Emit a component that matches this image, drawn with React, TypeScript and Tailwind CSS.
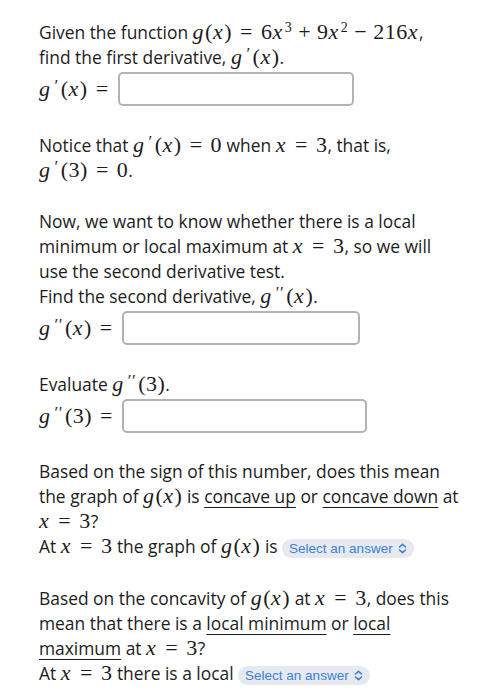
import React from 'react';

const V: React.FC<{ children: React.ReactNode }> = ({ children }) => (
  <span className="italic pr-[1px]">{children}</span>
);

// math run in a serif face, a bit bigger than the body text
const M: React.FC<{ children: React.ReactNode }> = ({ children }) => (
  <span className="font-['Liberation_Serif','DejaVu_Serif',serif] text-[22px] leading-none tracking-[0.5px]">{children}</span>
);

const Eq = () => <span className="mx-[8px]">=</span>;
const Op: React.FC<{ c: string }> = ({ c }) => <span className="mx-[6px]">{c}</span>;
const P: React.FC<{ n?: number }> = ({ n = 1 }) => (
  <span className="ml-[3px] mr-[2px] text-[17px] relative -top-[5px]">{n === 2 ? "′′" : "′"}</span>
);

const Gx = () => (
  <M>
    <V>g</V>(<V>x</V>)
  </M>
);

const X3 = () => (
  <M>
    <V>x</V>
    <Eq />3
  </M>
);

const AnswerBox: React.FC<{ width: string }> = ({ width }) => (
  <div className={`h-[34px] ${width} rounded-[5px] border-2 border-[#b3b3b3] bg-white`} />
);

const Select = () => (
  <button
    type="button"
    className="inline-flex items-center h-[19px] px-[7px] rounded-full bg-[#e6e9ee] text-[#3d7fd9] text-[13.5px] leading-none font-['Liberation_Sans',sans-serif] align-middle"
  >
    Select an answer
    <svg className="ml-[5px] w-[9px] h-[11px]" viewBox="0 0 9 11" fill="none" stroke="currentColor" strokeWidth={1.6} strokeLinecap="round" strokeLinejoin="round">
      <path d="M1.5 4 4.5 1.3 7.5 4" />
      <path d="M1.5 7 4.5 9.7 7.5 7" />
    </svg>
  </button>
);

const U: React.FC<{ children: React.ReactNode }> = ({ children }) => (
  <span className="underline underline-offset-[4px] decoration-[1px]">{children}</span>
);

export default function App() {
  return (
    <div className="min-h-[700px] bg-white text-[#1c1c1c] font-['Open_Sans','Noto_Sans',sans-serif] text-[17.4px] leading-[25px] px-[39px] pt-[20px]">
      <div className="mb-[27px]">
        <p>
          Given the function <Gx />
          <M>
            <Eq />6<V>x</V>
            <sup className="text-[14px] ml-[1px]">3</sup>
            <Op c="+" />9<V>x</V>
            <sup className="text-[14px] ml-[1px]">2</sup>
            <Op c="−" />216<V>x</V>
          </M>
          ,
        </p>
        <p>
          find the first derivative,{' '}
          <M>
            <V>g</V>
            <P />(<V>x</V>)
          </M>
          .
        </p>
        <div className="flex items-center gap-[1px] mt-[2px]">
          <M>
            <V>g</V>
            <P />(<V>x</V>)<Eq />
          </M>
          <AnswerBox width="w-[236px]" />
        </div>
      </div>

      <div className="mb-[26px]">
        <p>
          Notice that{' '}
          <M>
            <V>g</V>
            <P />(<V>x</V>)<Eq />0
          </M>{' '}
          when <X3 />, that is,
        </p>
        <p>
          <M>
            <V>g</V>
            <P />
            (3)<Eq />0
          </M>
          .
        </p>
      </div>

      <div className="mb-[27px]">
        <p>
          Now, we want to know whether there is a local minimum or local maximum at <X3 />, so we will use the second
          derivative test.
        </p>
        <p>
          Find the second derivative,{' '}
          <M>
            <V>g</V>
            <P n={2} />(<V>x</V>)
          </M>
          .
        </p>
        <div className="flex items-center gap-[1px] mt-[2px]">
          <M>
            <V>g</V>
            <P n={2} />(<V>x</V>)<Eq />
          </M>
          <AnswerBox width="w-[238px]" />
        </div>
      </div>

      <div className="mb-[26px]">
        <p>
          Evaluate{' '}
          <M>
            <V>g</V>
            <P n={2} />
            (3)
          </M>
          .
        </p>
        <div className="flex items-center gap-[1px] mt-[2px]">
          <M>
            <V>g</V>
            <P n={2} />
            (3)<Eq />
          </M>
          <AnswerBox width="w-[245px]" />
        </div>
      </div>

      <div className="mb-[27px]">
        <p>
          Based on the sign of this number, does this mean the graph of <Gx /> is <U>concave up</U> or{' '}
          <U>concave down</U> at <X3 />?
        </p>
        <p>
          At <X3 /> the graph of <Gx /> is <Select />
        </p>
      </div>

      <div>
        <p>
          Based on the concavity of <Gx /> at <X3 />, does this mean that there is a <U>local minimum</U> or{' '}
          <U>local maximum</U> at <X3 />?
        </p>
        <p>
          At <X3 /> there is a local <Select />
        </p>
      </div>
    </div>
  );
}
